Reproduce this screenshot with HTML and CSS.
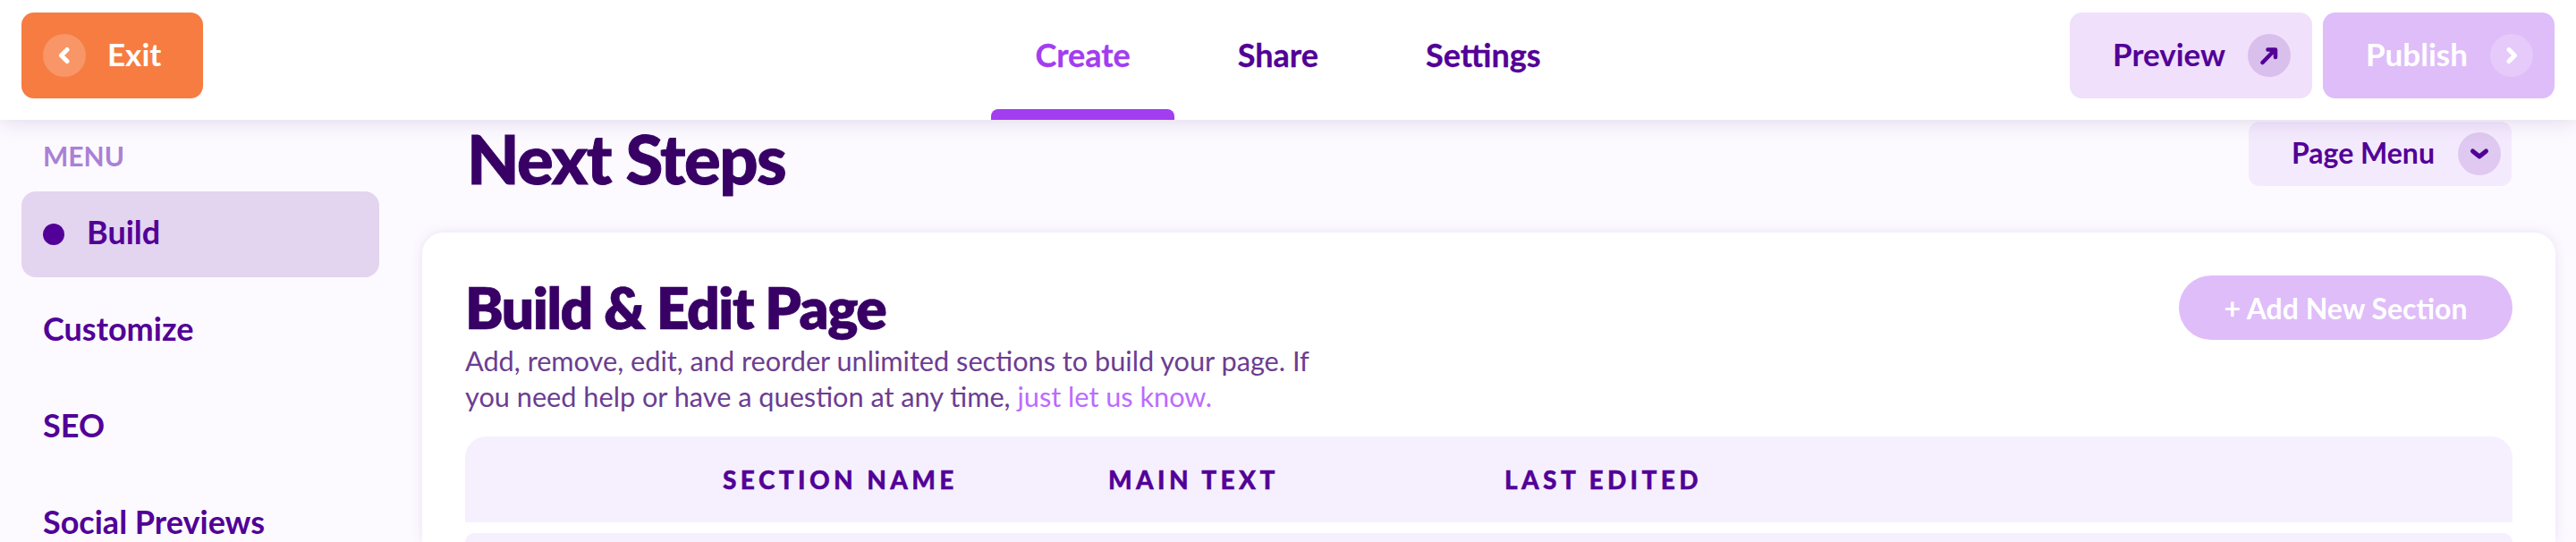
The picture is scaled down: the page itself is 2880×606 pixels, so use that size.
FILE: index.html
```html
<html>
  <head>
    <title>Build &amp; Edit Page</title>
    <link rel="stylesheet" href="styles.css">
  </head>
  <body>
    <div class="topbar">
      <div class="topbar-left">
        <button class="topbtn exit">
          <span class="circle circle-exit">
            <svg width="20" height="20" viewBox="0 0 20 20"><path d="M13 3.5 6.5 10l6.5 6.5" fill="none" stroke="#fff" stroke-width="5" stroke-linecap="round" stroke-linejoin="round"/></svg>
          </span>
          <span class="label">Exit</span>
        </button>
      </div>
      <div class="tabs">
        <a class="tab tab-active">Create</a>
        <a class="tab">Share</a>
        <a class="tab">Settings</a>
      </div>
      <div class="topbar-right">
        <button class="topbtn preview">
          <span class="label">Preview</span>
          <span class="circle circle-preview">
            <svg width="22" height="22" viewBox="0 0 22 22"><path d="M3.5 19 16.5 5.5M9.5 4.5H18V13" fill="none" stroke="#520097" stroke-width="4.5" stroke-linecap="round" stroke-linejoin="round"/></svg>
          </span>
        </button>
        <button class="topbtn publish">
          <span class="label">Publish</span>
          <span class="circle circle-publish">
            <svg width="20" height="20" viewBox="0 0 20 20"><path d="M7 3.5 13.5 10 7 16.5" fill="none" stroke="#fff" stroke-width="5" stroke-linecap="round" stroke-linejoin="round"/></svg>
          </span>
        </button>
      </div>
    </div>

    <div class="page">
      <div class="sidebar">
        <div class="menu-label">MENU</div>
        <a class="menu-item menu-active"><span class="dot"></span><span class="label">Build</span></a>
        <a class="menu-item"><span class="label">Customize</span></a>
        <a class="menu-item"><span class="label">SEO</span></a>
        <a class="menu-item menu-last"><span class="label">Social Previews</span></a>
      </div>

      <div class="main">
        <div class="main-head">
          <h1>Next Steps</h1>
          <button class="page-menu">
            <span class="label">Page Menu</span>
            <span class="circle circle-menu">
              <svg width="24" height="24" viewBox="0 0 24 24"><path d="M4.5 9 12 15l7.5-6" fill="none" stroke="#520097" stroke-width="5" stroke-linecap="round" stroke-linejoin="round"/></svg>
            </span>
          </button>
        </div>

        <div class="card">
          <div class="card-head">
            <div>
              <h2>Build &amp; Edit Page</h2>
              <p>Add, remove, edit, and reorder unlimited sections to build your page. If<br>you need help or have a question at any time, <a class="link">just let us know.</a></p>
            </div>
            <button class="add-btn">+ Add New Section</button>
          </div>
          <div class="table-head">
            <span class="col col-name">SECTION NAME</span>
            <span class="col col-text">MAIN TEXT</span>
            <span class="col col-date">LAST EDITED</span>
          </div>
          <div class="table-row"></div>
        </div>
      </div>
    </div>
  </body>
</html>
```

FILE: styles.css
```css
html, body {
  margin: 0;
  height: 606px;
  overflow: hidden;
}
body {
  background: #fcfaff;
  font-family: "Lato", "Liberation Sans", sans-serif;
  color: #520097;
}
button {
  font-family: inherit;
  border: none;
  cursor: pointer;
}
.label {
  padding-bottom: 4px;
}

.topbar {
  position: relative;
  z-index: 2;
  height: 134px;
  box-sizing: border-box;
  padding: 14px 24px 0;
  display: grid;
  grid-template-columns: 1fr auto 1fr;
  background: #fff;
  box-shadow: 0 0 24px rgb(60 0 110 / 16%);
}
.topbar-right {
  display: flex;
  justify-content: flex-end;
  gap: 12px;
}
.topbtn {
  height: 96px;
  display: flex;
  align-items: center;
  border-radius: 14px;
  font-size: 35px;
  font-weight: 700;
}
.exit {
  width: 203px;
  padding: 0 0 0 24px;
  gap: 24px;
  background: #f77c42;
  color: #fff;
}
.preview {
  width: 271px;
  padding: 0 24px 0 48px;
  justify-content: space-between;
  background: #f0e0fb;
  color: #520097;
}
.publish {
  width: 259px;
  padding: 0 24px 0 48px;
  justify-content: space-between;
  background: #dfbdf9;
  color: #fff;
}

.circle {
  width: 48px;
  height: 48px;
  border-radius: 50%;
  display: flex;
  align-items: center;
  justify-content: center;
}
.circle-exit { background: rgb(255 255 255 / 20%); }
.circle-preview { background: #d9bfec; }
.circle-publish { background: rgb(255 255 255 / 20%); }
.circle-menu { background: #dfc9f0; }

.tabs {
  display: flex;
  gap: 22px;
  margin-top: -14px;
}
.tab {
  position: relative;
  height: 134px;
  box-sizing: border-box;
  padding: 39px 49px 0;
  font-size: 36px;
  font-weight: 700;
  -webkit-text-stroke: 0.3px;
}
.tab-active {
  color: #a23df0;
}
.tab-active::after {
  content: "";
  position: absolute;
  left: 0;
  right: 0;
  bottom: 0;
  height: 12px;
  border-radius: 8px 8px 0 0;
  background: #a23df0;
}

.page {
  display: flex;
  height: 472px;
}
.sidebar {
  width: 472px;
  flex-shrink: 0;
  box-sizing: border-box;
  padding: 22px 48px 0 24px;
}
.menu-label {
  padding-left: 24px;
  height: 58px;
  font-size: 30px;
  font-weight: 700;
  color: #ab80d5;
}
.menu-item {
  height: 96px;
  margin-bottom: 12px;
  padding-left: 24px;
  display: flex;
  align-items: center;
  font-size: 36px;
  font-weight: 700;
  border-radius: 16px;
}
.menu-item .label {
  padding-bottom: 6px;
}
.menu-last {
  height: 68px;
  margin-bottom: 0;
  align-items: flex-start;
  padding-top: 23px;
  box-sizing: border-box;
}
.menu-active {
  background: #e3d4ef;
}
.dot {
  width: 24px;
  height: 24px;
  margin-right: 25px;
  border-radius: 50%;
  background: #520097;
}

.main {
  flex: 1;
  padding-right: 23px;
}
.main-head {
  height: 126px;
  display: flex;
  justify-content: space-between;
  align-items: flex-start;
  padding: 2px 49px 0 50px;
  box-sizing: border-box;
}
h1 {
  margin: 2px 0 0;
  font-size: 76px;
  line-height: 78px;
  font-weight: 900;
  letter-spacing: -1.5px;
  color: #380065;
  -webkit-text-stroke: 1px;
}
.page-menu {
  width: 294px;
  height: 72px;
  padding: 0 12px 0 48px;
  display: flex;
  align-items: center;
  justify-content: space-between;
  border-radius: 12px;
  background: #f4eafd;
  color: #520097;
  font-size: 32px;
  font-weight: 700;
}

.card {
  height: 346px;
  box-sizing: border-box;
  padding: 48px 48px 0;
  background: #fff;
  border-radius: 24px 24px 0 0;
  box-shadow: 0 0 14px rgb(80 0 150 / 10%);
}
.card-head {
  display: flex;
  justify-content: space-between;
  align-items: flex-start;
  height: 180px;
}
h2 {
  margin: 0;
  font-size: 64px;
  line-height: 72px;
  font-weight: 800;
  letter-spacing: -1.5px;
  color: #380065;
  -webkit-text-stroke: 0.6px;
}
.card-head p {
  margin: 4px 0 0;
  font-size: 30.7px;
  line-height: 40px;
  color: #6c3d91;
}
.link {
  color: #bb6bff;
}
.add-btn {
  width: 373px;
  height: 72px;
  border-radius: 36px;
  background: #dfbdf9;
  color: #fff;
  font-size: 32px;
  font-weight: 700;
}
.table-head {
  height: 96px;
  display: flex;
  align-items: center;
  background: #f6f0fe;
  border-radius: 24px 24px 0 0;
}
.col {
  font-size: 28px;
  font-weight: 900;
  letter-spacing: 4.4px;
  -webkit-text-stroke: 0.4px;
}
.col-name { margin-left: 288px; width: 431px; }
.col-text { width: 443px; }
.table-row {
  height: 10px;
  margin-top: 12px;
  background: #f6f0fe;
  border-radius: 24px 24px 0 0;
}
```
